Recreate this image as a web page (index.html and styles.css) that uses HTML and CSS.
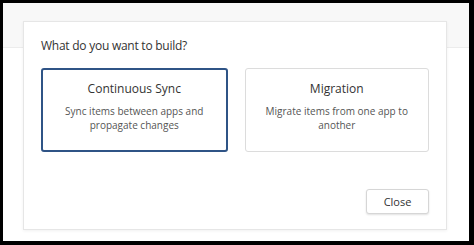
FILE: index.html
```html
<!DOCTYPE html>
<html>
<head>
<meta charset="utf-8">
<link rel="stylesheet" href="styles.css">
</head>
<body>
<div class="frame">
  <div class="page-header"></div>
  <div class="page-body"></div>
  <div class="modal">
    <div class="modal-title">What do you want to build?</div>
    <div class="options">
      <div class="option selected">
        <div class="option-title">Continuous Sync</div>
        <div class="option-desc">Sync items between apps and propagate changes</div>
      </div>
      <div class="option">
        <div class="option-title">Migration</div>
        <div class="option-desc">Migrate items from one app to another</div>
      </div>
    </div>
    <div class="footer">
      <button class="btn">Close</button>
    </div>
  </div>
</div>
</body>
</html>
```

FILE: styles.css
```css
html, body {
  margin: 0;
  padding: 0;
  background: #000;
}
body {
  width: 474px;
  height: 245px;
  overflow: hidden;
  font-family: "Open Sans", "Noto Sans", sans-serif;
}
.frame {
  position: relative;
  margin: 3px 0 0 3px;
  width: 466px;
  height: 238px;
  background: #fff;
  display: flex;
  flex-direction: column;
}
.page-header {
  height: 44px;
  background: #f8f8f8;
  border-bottom: 1px solid #ececec;
}
.page-body {
  flex: 1;
  background: #fff;
}
.modal {
  position: absolute;
  left: 20px;
  top: 18px;
  width: 424px;
  height: 209px;
  box-sizing: border-box;
  background: #fff;
  border: 1px solid #e6e6e6;
  box-shadow: 0 1px 3px rgba(0,0,0,0.06);
  padding: 15px 17px 15px 17px;
  display: flex;
  flex-direction: column;
}
.modal-title {
  font-size: 12px;
  line-height: 18px;
  letter-spacing: -0.25px;
  color: #333;
}
.options {
  margin-top: 13px;
  display: flex;
  gap: 17px;
}
.option {
  flex: 1;
  height: 84px;
  box-sizing: border-box;
  border: 1px solid #dcdcdc;
  border-radius: 3px;
  text-align: center;
  padding: 11px 14px 0;
}
.option.selected {
  border: 2px solid #2f5486;
  padding-top: 10px;
}
.option-title {
  font-size: 12px;
  line-height: 18px;
  color: #333;
}
.option-desc {
  margin-top: 7px;
  font-size: 10px;
  line-height: 13.5px;
  color: #555;
}
.footer {
  margin-top: auto;
  display: flex;
  justify-content: flex-end;
}
.btn {
  width: 63px;
  height: 25px;
  font-family: "Open Sans", "Noto Sans", sans-serif;
  font-size: 11px;
  color: #333;
  background: #fff;
  border: 1px solid #d6d6d6;
  border-radius: 3px;
  box-shadow: 0 1px 2px rgba(0,0,0,0.12);
  padding: 0;
}
```
